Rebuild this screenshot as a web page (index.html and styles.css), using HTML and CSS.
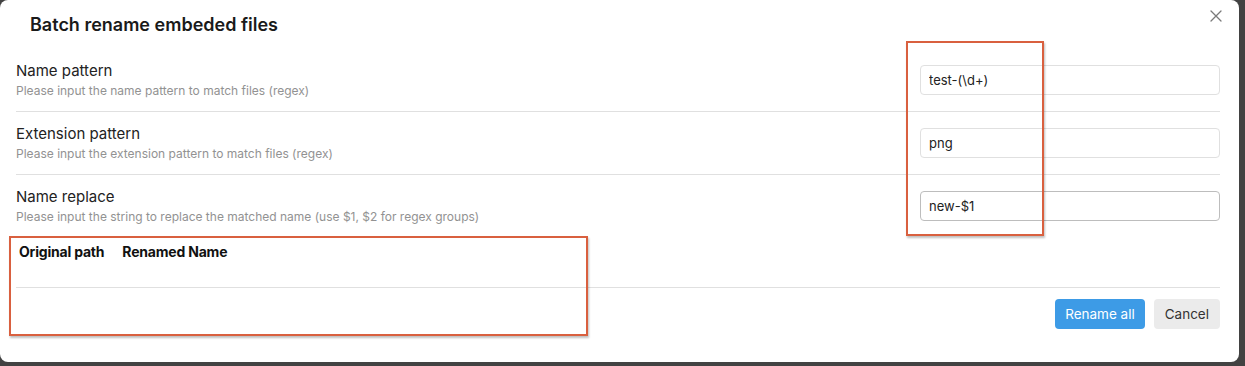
FILE: index.html
```html
<!DOCTYPE html>
<html lang="en">

<head>
    <meta charset="UTF-8">
    <meta name="viewport" content="width=device-width, initial-scale=1.0">
    <title>Batch rename embeded files</title>
    <link rel="stylesheet" href="styles.css">
</head>

<body>
    <div class="modal">
        <button class="modal-close" aria-label="Close">
            <svg width="12" height="12" viewBox="0 0 12 12">
                <path d="M1 1 L11 11 M11 1 L1 11" stroke="#7a7a7a" stroke-width="1.3" fill="none" stroke-linecap="round" />
            </svg>
        </button>

        <div class="modal-title">Batch rename embeded files</div>

        <div class="setting-item">
            <div class="setting-info">
                <div class="setting-name">Name pattern</div>
                <div class="setting-desc">Please input the name pattern to match files (regex)</div>
            </div>
            <input type="text" class="setting-input" value="test-(\d+)">
        </div>

        <div class="setting-item">
            <div class="setting-info">
                <div class="setting-name">Extension pattern</div>
                <div class="setting-desc">Please input the extension pattern to match files (regex)</div>
            </div>
            <input type="text" class="setting-input" value="png">
        </div>

        <div class="setting-item">
            <div class="setting-info">
                <div class="setting-name">Name replace</div>
                <div class="setting-desc">Please input the string to replace the matched name (use $1, $2 for regex groups)</div>
            </div>
            <input type="text" class="setting-input hovered" value="new-$1">
        </div>

        <table class="rename-table">
            <thead>
                <tr>
                    <th>Original path</th>
                    <th>Renamed Name</th>
                </tr>
            </thead>
            <tbody></tbody>
        </table>

        <div class="button-row">
            <button class="btn btn-primary">Rename all</button>
            <button class="btn btn-cancel">Cancel</button>
        </div>

        <!-- annotation boxes from the screenshot -->
        <div class="note note-inputs"></div>
        <div class="note note-table"></div>
    </div>
</body>

</html>
```

FILE: styles.css
```css
body {
    margin: 0;
    padding: 0;
    background: #424242;
    font-family: Inter, 'Noto Sans', sans-serif;
    color: #222;
}

.modal {
    position: relative;
    box-sizing: border-box;
    width: 1239px;
    height: 362px;
    background: white;
    border-radius: 8px;
    padding: 0 19px 0 16px;
}

.modal-close {
    position: absolute;
    top: 9px;
    right: 16px;
    width: 14px;
    height: 14px;
    padding: 1px;
    border: none;
    background: none;
    display: flex;
    align-items: center;
    justify-content: center;
}

.modal-title {
    font-size: 18px;
    font-weight: 600;
    line-height: 24px;
    color: #1a1a1a;
    padding: 13px 0 12px 14px;
}

.setting-item {
    display: flex;
    align-items: center;
    justify-content: space-between;
    padding: 12px 0;
    border-top: 1px solid #e0e0e0;
}

.modal-title + .setting-item {
    border-top: none;
}

.setting-name {
    font-size: 15px;
    line-height: 19px;
    color: #222;
}

.setting-desc {
    font-size: 12px;
    line-height: 16px;
    color: #929292;
    margin-top: 3px;
}

.setting-input {
    box-sizing: border-box;
    width: 300px;
    height: 30px;
    padding: 0 8px;
    border: 1px solid #e0e0e0;
    border-radius: 4px;
    font-family: Inter, 'Noto Sans', sans-serif;
    font-size: 13px;
    color: #222;
    background: white;
    outline: none;
}

.setting-input.hovered {
    border-color: #bdbdbd;
}

.rename-table {
    border-collapse: collapse;
    margin-top: 3px;
    margin-bottom: 22px;
}

.rename-table th {
    font-size: 14px;
    font-weight: 700;
    line-height: 20px;
    text-align: left;
    padding: 2px 3px 3px;
    letter-spacing: -0.2px;
    color: #111;
}

.rename-table th:first-child {
    padding-right: 15px;
}

.button-row {
    display: flex;
    justify-content: flex-end;
    gap: 9px;
    border-top: 1px solid #e0e0e0;
    padding-top: 11px;
}

.btn {
    height: 30px;
    padding: 0 10px;
    border: none;
    border-radius: 4px;
    font-family: Inter, 'Noto Sans', sans-serif;
    font-size: 13.5px;
    cursor: pointer;
}

.btn-primary {
    background: #3d9be6;
    color: white;
}

.btn-cancel {
    padding: 0 11px;
    background: #ebebeb;
    color: #333;
}

.note {
    position: absolute;
    border: 2px solid #d9603f;
    box-shadow: 1px 2px 2px rgba(0, 0, 0, 0.25);
    pointer-events: none;
}

.note-inputs {
    left: 906px;
    top: 41px;
    width: 134px;
    height: 191px;
}

.note-table {
    left: 9px;
    top: 236px;
    width: 575px;
    height: 96px;
}
```
